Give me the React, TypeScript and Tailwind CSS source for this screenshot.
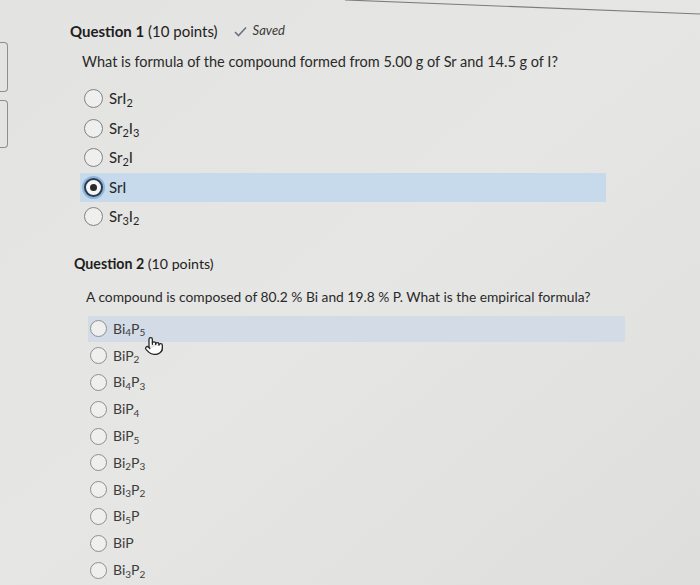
import { Pointer } from 'lucide-react';

type Choice = { parts: [string, string?][] };

// formula pieces: [text, subscript]
const q1Choices: Choice[] = [
  { parts: [['SrI', '2']] },
  { parts: [['Sr', '2'], ['I', '3']] },
  { parts: [['Sr', '2'], ['I']] },
  { parts: [['SrI']] },
  { parts: [['Sr', '3'], ['I', '2']] },
];

const q2Choices: Choice[] = [
  { parts: [['Bi', '4'], ['P', '5']] },
  { parts: [['BiP', '2']] },
  { parts: [['Bi', '4'], ['P', '3']] },
  { parts: [['BiP', '4']] },
  { parts: [['BiP', '5']] },
  { parts: [['Bi', '2'], ['P', '3']] },
  { parts: [['Bi', '3'], ['P', '2']] },
  { parts: [['Bi', '5'], ['P']] },
  { parts: [['BiP']] },
  { parts: [['Bi', '3'], ['P', '2']] },
  { parts: [['Bi', '2'], ['P', '5']] },
];

function Formula({ parts, subClass }: { parts: Choice['parts']; subClass: string }) {
  return (
    <span className="leading-none">
      {parts.map(([t, s], i) => (
        <span key={i}>
          {t}
          {s && <sub className={subClass}>{s}</sub>}
        </span>
      ))}
    </span>
  );
}

function Radio({ checked, small }: { checked?: boolean; small?: boolean }) {
  if (checked) {
    return (
      <span className="flex h-[19px] w-[19px] shrink-0 items-center justify-center rounded-full border-2 border-[#2e3b4a] bg-[#f4f6f8] shadow-[0_0_0_2px_#8fb6dc]">
        <span className="h-[7px] w-[7px] rounded-full bg-[#2a2a2a]" />
      </span>
    );
  }
  return (
    <span
      className={
        small
          ? 'h-[17px] w-[17px] shrink-0 rounded-full border-[1.5px] border-[#8b8f94] bg-[#efefed]'
          : 'h-[19px] w-[19px] shrink-0 rounded-full border-[1.5px] border-[#7f8388] bg-[#efefed]'
      }
    />
  );
}

export default function App() {
  return (
    <div
      className="relative flex h-[585px] w-[700px] overflow-hidden bg-gradient-to-br from-[#e3e3e1] via-[#e6e6e4] to-[#dededc] text-[#262626]"
      style={{ fontFamily: 'Lato, "Open Sans", sans-serif' }}
    >
      {/* sidebar edge, cut off by the photo */}
      <div className="flex w-[8px] shrink-0 flex-col gap-[8px] pt-[42px]">
        <div className="h-[50px] rounded-r-[4px] border-y border-r border-[#8e8e8e]" />
        <div className="h-[48px] rounded-r-[4px] border-y border-r border-[#8e8e8e]" />
      </div>

      <div className="flex flex-1 flex-col pl-[62px] pt-[20px]">
        {/* Question 1 */}
        <div className="flex h-[22px] items-center gap-[16px]">
          <h2 className="text-[15px] text-[#1e1e1e]">
            <span className="font-bold">Question 1</span> (10 points)
          </h2>
          <span className="flex items-center gap-[6px] text-[13px] italic text-[#3a3a3a]">
            <svg width="13" height="11" viewBox="0 0 13 11" fill="none">
              <path d="M1 6 L4.5 9.5 L12 1.5" stroke="#6b7480" strokeWidth="1.6" />
            </svg>
            Saved
          </span>
        </div>
        <p className="mt-[10px] pl-[12px] text-[14.5px] leading-[20px] text-[#2a2a2a]">
          What is formula of the compound formed from 5.00 g of Sr and 14.5 g of I?
        </p>
        <div className="ml-[10px] mt-[12px] flex w-[526px] flex-col">
          {q1Choices.map((c, i) => (
            <div
              key={i}
              className={`flex h-[29.5px] shrink-0 items-center gap-[6px] pl-[4px] text-[15px] ${
                i === 3 ? 'bg-[#c6daec]' : ''
              }`}
            >
              <Radio checked={i === 3} />
              <Formula parts={c.parts} subClass="text-[11px]" />
            </div>
          ))}
        </div>

        {/* Question 2 */}
        <h2 className="mt-[22px] pl-[4px] text-[14.2px] leading-[20px] text-[#1e1e1e]">
          <span className="font-bold">Question 2</span> (10 points)
        </h2>
        <p className="mt-[13px] pl-[16px] text-[13.8px] leading-[20px] text-[#2a2a2a]">
          A compound is composed of 80.2 % Bi and 19.8 % P. What is the empirical formula?
        </p>
        <div className="ml-[18px] mt-[9px] flex w-[537px] flex-col">
          {q2Choices.map((c, i) => (
            <div
              key={i}
              className={`flex h-[26.8px] shrink-0 items-center gap-[6px] pl-[2px] text-[14px] text-[#3c3c3c] ${
                i === 0 ? 'bg-[#d3dbe6]' : ''
              }`}
            >
              <Radio small />
              <Formula parts={c.parts} subClass="text-[10px]" />
            </div>
          ))}
        </div>
      </div>

      {/* mouse cursor */}
      <Pointer className="absolute left-[144px] top-[336px] h-[20px] w-[20px] text-[#222]" strokeWidth={1.5} fill="#fff" />

      {/* edge of the monitor bezel */}
      <svg className="absolute left-0 top-0" width="700" height="20">
        <line x1="345" y1="0" x2="700" y2="14" stroke="#7d7d7d" strokeWidth="1.2" />
      </svg>
    </div>
  );
}
